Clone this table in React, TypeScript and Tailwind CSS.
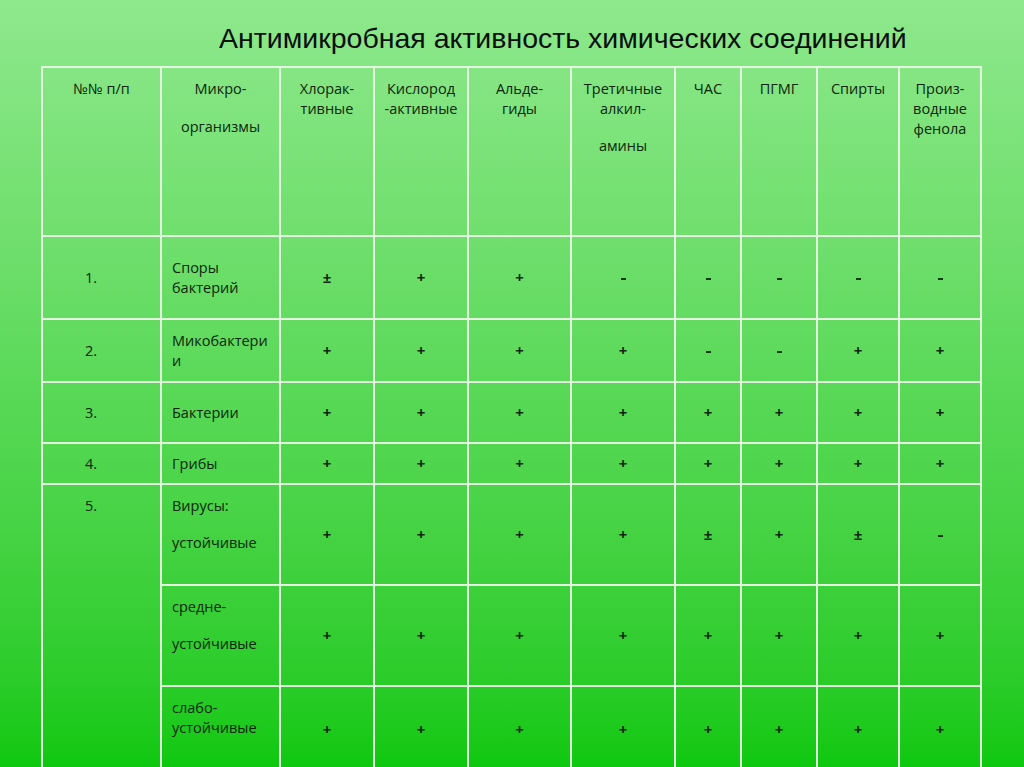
const cols = [119, 119, 94, 94, 103, 104, 66, 76, 82, 82];

type Row = {
  num?: string;
  numSpan?: number;
  name: React.ReactNode;
  nameTop?: boolean;
  values: string[];
  h: string;
};

const rows: Row[] = [
  {
    num: "1.",
    name: (
      <>
        Споры
        <br />
        бактерий
      </>
    ),
    values: ["±", "+", "+", "-", "-", "-", "-", "-"],
    h: "h-[83px]",
  },
  {
    num: "2.",
    name: (
      <>
        Микобактери
        <br />и
      </>
    ),
    values: ["+", "+", "+", "+", "-", "-", "+", "+"],
    h: "h-[63px]",
  },
  {
    num: "3.",
    name: "Бактерии",
    values: ["+", "+", "+", "+", "+", "+", "+", "+"],
    h: "h-[61px]",
  },
  {
    num: "4.",
    name: "Грибы",
    values: ["+", "+", "+", "+", "+", "+", "+", "+"],
    h: "h-[41px]",
  },
  {
    num: "5.",
    numSpan: 3,
    name: (
      <>
        <p>Вирусы:</p>
        <p className="mt-[17px]">устойчивые</p>
      </>
    ),
    nameTop: true,
    values: ["+", "+", "+", "+", "±", "+", "±", "-"],
    h: "h-[101px]",
  },
  {
    name: (
      <>
        <p>средне-</p>
        <p className="mt-[17px]">устойчивые</p>
      </>
    ),
    nameTop: true,
    values: ["+", "+", "+", "+", "+", "+", "+", "+"],
    h: "h-[101px]",
  },
  {
    name: (
      <>
        слабо-
        <br />
        устойчивые
      </>
    ),
    nameTop: true,
    values: ["+", "+", "+", "+", "+", "+", "+", "+"],
    h: "h-[86px]",
  },
];

const cell = "border-2 border-[#e3f6df] p-0";

const Mark = ({ v }: { v: string }) => {
  if (v === "-") {
    return <span className="inline-block h-[2px] w-[5px] bg-[#143814] align-middle" />;
  }
  return <span className="font-bold text-[15px]">{v}</span>;
};

const App = () => {
  return (
    <div
      className="h-[767px] w-[1024px] overflow-hidden bg-gradient-to-b from-[#8ee88c] via-[#5ad958] to-[#0dc80d] text-[#0d260d]"
      style={{ fontFamily: "'Open Sans', 'Noto Sans', sans-serif" }}
    >
      {/* Title */}
      <h1
        className="pl-[219px] pt-[21px] h-[66px] text-[28.5px] leading-[34px] text-[#0a0f0a]"
        style={{ fontFamily: "'Liberation Sans', Arial, sans-serif" }}
      >
        Антимикробная активность химических соединений
      </h1>

      <table className="ml-[41px] table-fixed border-collapse text-[14.5px] leading-[20px]">
        <colgroup>
          {cols.map((w, i) => (
            <col key={i} style={{ width: w }} />
          ))}
        </colgroup>
        <thead>
          <tr className="h-[169px] align-top text-center">
            <th className={`${cell} pt-[11px] font-normal`}>№№ п/п</th>
            <th className={`${cell} pt-[11px] font-normal`}>
              <p>Микро-</p>
              <p className="mt-[18px]">организмы</p>
            </th>
            <th className={`${cell} pt-[11px] font-normal`}>
              Хлорак-
              <br />
              тивные
            </th>
            <th className={`${cell} pt-[11px] font-normal`}>
              Кислород
              <br />
              -активные
            </th>
            <th className={`${cell} pt-[11px] font-normal`}>
              Альде-
              <br />
              гиды
            </th>
            <th className={`${cell} pt-[11px] font-normal`}>
              <p>Третичные</p>
              <p>алкил-</p>
              <p className="mt-[17px]">амины</p>
            </th>
            <th className={`${cell} pt-[11px] font-normal`}>ЧАС</th>
            <th className={`${cell} pt-[11px] font-normal`}>ПГМГ</th>
            <th className={`${cell} pt-[11px] font-normal`}>Спирты</th>
            <th className={`${cell} pt-[11px] font-normal`}>
              Произ-
              <br />
              водные
              <br />
              фенола
            </th>
          </tr>
        </thead>
        <tbody>
          {rows.map((r, i) => (
            <tr key={i} className={r.h}>
              {r.num && (
                <td
                  rowSpan={r.numSpan}
                  className={`${cell} pl-[42px] ${r.numSpan ? "align-top pt-[11px]" : "align-middle"}`}
                >
                  {r.num}
                </td>
              )}
              <td className={`${cell} pl-[10px] ${r.nameTop ? "align-top pt-[11px]" : "align-middle"}`}>
                {r.name}
              </td>
              {r.values.map((v, j) => (
                <td key={j} className={`${cell} text-center align-middle`}>
                  <Mark v={v} />
                </td>
              ))}
            </tr>
          ))}
        </tbody>
      </table>
    </div>
  );
};

export default App;
